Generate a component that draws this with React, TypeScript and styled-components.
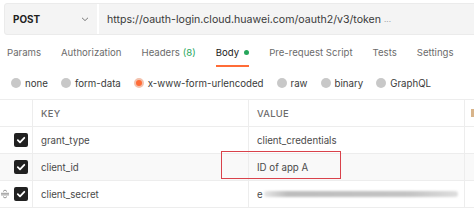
import * as React from 'react'
import styled, { createGlobalStyle } from 'styled-components'

const GlobalStyle = createGlobalStyle`
  html, body {
    margin: 0;
    padding: 0;
    background: #fff;
  }
  body {
    font-family: Inter, "Open Sans", "Liberation Sans", sans-serif;
    color: #212121;
    -webkit-font-smoothing: antialiased;
  }
`

const Page = styled.div`
  width: 474px;
  height: 208px;
  overflow: hidden;
  display: flex;
  flex-direction: column;
  & > * {
    flex-shrink: 0;
  }
`

const UrlBar = styled.div`
  box-sizing: border-box;
  margin: 3px -6px 0 4px;
  height: 32px;
  display: flex;
  align-items: stretch;
  background: #f4f4f4;
  border: 1px solid #ebebeb;
  border-radius: 3px;
`

const Method = styled.div`
  width: 84px;
  padding: 0 0 0 8px;
  display: flex;
  align-items: center;
  justify-content: space-between;
  border-right: 2px solid #fff;
  font-size: 9.9px;
  font-weight: 700;
  color: #212121;
`

const Chevron = styled.svg`
  width: 8px;
  height: 8px;
  margin-right: 8px;
`

const UrlText = styled.div`
  padding-left: 8px;
  display: flex;
  align-items: center;
  font-size: 10.6px;
  color: #3a3a3a;
  white-space: nowrap;
`

const Ellipsis = styled.span`
  color: #9a9a9a;
  margin-left: 3px;
  font-size: 8px;
`

const Tabs = styled.div`
  display: flex;
  gap: 20px;
  padding: 0 0 0 7px;
  height: 31px;
  margin-top: 1px;
`

const Tab = styled.div<{ $active?: boolean }>`
  display: flex;
  align-items: center;
  font-size: 9.6px;
  white-space: nowrap;
  color: ${p => (p.$active ? '#212121' : '#6b6b6b')};
  border-bottom: 2px solid ${p => (p.$active ? '#ff6c37' : 'transparent')};
  padding-top: 4px;
`

const Count = styled.span`
  color: #26a65b;
  margin-left: 3px;
`

const Dot = styled.span`
  width: 5px;
  height: 5px;
  border-radius: 50%;
  background: #26a65b;
  margin-left: 5px;
`

const RadioRow = styled.div`
  display: flex;
  align-items: center;
  gap: 13px;
  padding-left: 11px;
  height: 32px;
`

const RadioLabel = styled.label`
  display: flex;
  align-items: center;
  gap: 4px;
  font-size: 9.7px;
  color: #3a3a3a;
  white-space: nowrap;
`

const RadioDot = styled.span<{ $checked?: boolean }>`
  box-sizing: border-box;
  width: 10px;
  height: 10px;
  border-radius: 50%;
  background: ${p => (p.$checked ? '#ff6c37' : '#c8c8c8')};
  border: ${p => (p.$checked ? '2px solid #f3c2ae' : 'none')};
`

const Table = styled.div`
  position: relative;
  border-top: 1px solid #ededed;
`

const Row = styled.div<{ $hover?: boolean }>`
  display: grid;
  grid-template-columns: 33px 216px 216px 1fr;
  height: 26px;
  border-bottom: 1px solid #ededed;
  background: ${p => (p.$hover ? '#f9f9f9' : '#fff')};
`

const Cell = styled.div<{ $head?: boolean }>`
  display: flex;
  align-items: center;
  padding-left: 8px;
  border-right: 1px solid #ededed;
  font-size: ${p => (p.$head ? '9.4px' : '9.7px')};
  font-weight: ${p => (p.$head ? 500 : 400)};
  color: ${p => (p.$head ? '#6b6b6b' : '#4a4a4a')};
  letter-spacing: ${p => (p.$head ? '0.3px' : '0')};
  overflow: hidden;
  white-space: nowrap;
`

const CheckCell = styled.div`
  display: flex;
  align-items: center;
  justify-content: flex-end;
  padding-right: 4px;
  gap: 4px;
  border-right: 1px solid #ededed;
`

const LastCell = styled.div`
  display: flex;
  align-items: center;
  justify-content: flex-end;
`

const Mark = styled.span`
  width: 3px;
  height: 8px;
  background: #d8b48a;
`

const Box = styled.span`
  width: 14px;
  height: 14px;
  border-radius: 2px;
  background: #212121;
  display: flex;
  align-items: center;
  justify-content: center;
`

const Blur = styled.span`
  display: inline-block;
  width: 194px;
  height: 6px;
  margin-left: 1px;
  border-radius: 3px;
  background: linear-gradient(90deg, #e6e6e6 0%, #bdbdbd 12%, #c4c4c4 75%, #dedede 100%);
  filter: blur(1px);
`

const Highlight = styled.div`
  position: absolute;
  left: 221px;
  top: 51px;
  width: 118px;
  height: 26px;
  border: 1.5px solid #d9424b;
  pointer-events: none;
`

const Check = () => (
  <Box>
    <svg width="10" height="10" viewBox="0 0 10 10">
      <path d="M1.8 5.2 L4 7.3 L8.3 2.8" fill="none" stroke="#fff" strokeWidth="1.8" strokeLinecap="round" strokeLinejoin="round" />
    </svg>
  </Box>
)

const DragHandle = () => (
  <svg width="10" height="10" viewBox="0 0 10 10">
    <path d="M3 2.5 L5 1 L7 2.5 M1 4.3 H9 M1 5.9 H9 M3 7.6 L5 9 L7 7.6" fill="none" stroke="#8a8a8a" strokeWidth="0.9" />
  </svg>
)

const tabs = ['Params', 'Authorization', 'Headers', 'Body', 'Pre-request Script', 'Tests', 'Settings']
const bodyTypes = ['none', 'form-data', 'x-www-form-urlencoded', 'raw', 'binary', 'GraphQL']

export default function App() {
  return (
    <Page>
      <GlobalStyle />
      <UrlBar>
        <Method>
          POST
          <Chevron viewBox="0 0 8 8">
            <path d="M1 2.8 L4 5.6 L7 2.8" fill="none" stroke="#7a7a7a" strokeWidth="1" />
          </Chevron>
        </Method>
        <UrlText>
          https://oauth-login.cloud.huawei.com/oauth2/v3/token
          <Ellipsis>...</Ellipsis>
        </UrlText>
      </UrlBar>
      <Tabs>
        {tabs.map(t => (
          <Tab key={t} $active={t === 'Body'}>
            {t}
            {t === 'Headers' && <Count>(8)</Count>}
            {t === 'Body' && <Dot />}
          </Tab>
        ))}
      </Tabs>
      <RadioRow>
        {bodyTypes.map(b => (
          <RadioLabel key={b}>
            <RadioDot $checked={b === 'x-www-form-urlencoded'} />
            {b}
          </RadioLabel>
        ))}
      </RadioRow>
      <Table>
        <Row>
          <CheckCell />
          <Cell $head>KEY</Cell>
          <Cell $head>VALUE</Cell>
          <LastCell><Mark /></LastCell>
        </Row>
        <Row>
          <CheckCell><Check /></CheckCell>
          <Cell>grant_type</Cell>
          <Cell>client_credentials</Cell>
          <LastCell />
        </Row>
        <Row $hover>
          <CheckCell><Check /></CheckCell>
          <Cell>client_id</Cell>
          <Cell>ID of app A</Cell>
          <LastCell />
        </Row>
        <Row>
          <CheckCell><DragHandle /><Check /></CheckCell>
          <Cell>client_secret</Cell>
          <Cell>e<Blur /></Cell>
          <LastCell />
        </Row>
        <Row>
          <CheckCell />
          <Cell />
          <Cell />
          <LastCell />
        </Row>
        <Highlight />
      </Table>
    </Page>
  )
}
